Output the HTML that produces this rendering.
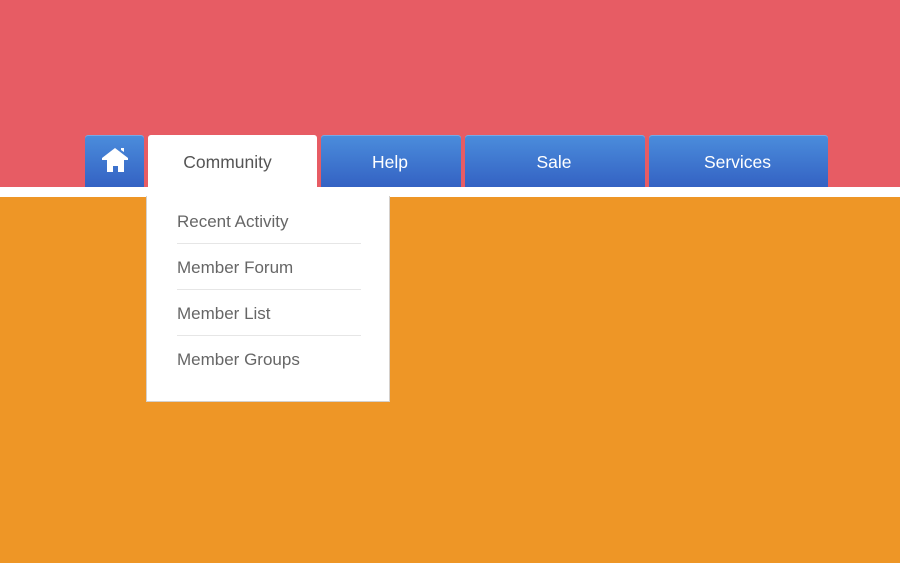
<!DOCTYPE html>
<html><head><meta charset="utf-8"><style>
*{margin:0;padding:0;box-sizing:border-box}
body{width:900px;height:563px;overflow:hidden;position:relative;background:#ee9626;font-family:"Liberation Sans",sans-serif}
.red{position:absolute;left:0;top:0;width:900px;height:187px;background:#e75c64}
.white{position:absolute;left:0;top:187px;width:900px;height:10px;background:#fff}
.tab{position:absolute;top:135px;height:52px;border-radius:3px 3px 0 0;background:linear-gradient(#4b8ddc,#3462c3);color:#fff;font-size:17.5px;text-align:center;line-height:54px;box-shadow:inset 0 1px 0 rgba(255,255,255,.25);padding-right:2px}
.active{background:#fff;color:#555;height:62px;padding-right:10px}
.dd{position:absolute;left:146px;top:196px;width:244px;height:206px;background:#fff;border:1px solid #d4d0cc;border-top:none}
.item{position:absolute;left:30px;width:184px;font-size:17px;color:#666;height:46px;line-height:1}
.sep{position:absolute;left:30px;width:184px;height:1px;background:#e6e6e6}
</style></head><body>
<div class="red"></div>
<div class="white"></div>
<div class="tab" style="left:85px;width:59px">
<svg width="28" height="28" viewBox="0 0 28 28" style="position:absolute;left:16px;top:10px"><path d="M14 3 L27 13 L27 15 L23 15 L23 27 L17 27 L17 21 L12 21 L12 27 L6 27 L6 15 L1 15 L1 13 Z M20 3 L23 3 L23 7 L20 5 Z" fill="#fff"/></svg>
</div>
<div class="dd">
<div class="item" style="top:17px">Recent Activity</div>
<div class="sep" style="top:47px"></div>
<div class="item" style="top:63px">Member Forum</div>
<div class="sep" style="top:93px"></div>
<div class="item" style="top:109px">Member List</div>
<div class="sep" style="top:139px"></div>
<div class="item" style="top:155px">Member Groups</div>
</div>
<div class="tab active" style="left:148px;width:169px">Community</div>
<div class="tab" style="left:321px;width:140px">Help</div>
<div class="tab" style="left:465px;width:180px">Sale</div>
<div class="tab" style="left:649px;width:179px">Services</div>
</body></html>
